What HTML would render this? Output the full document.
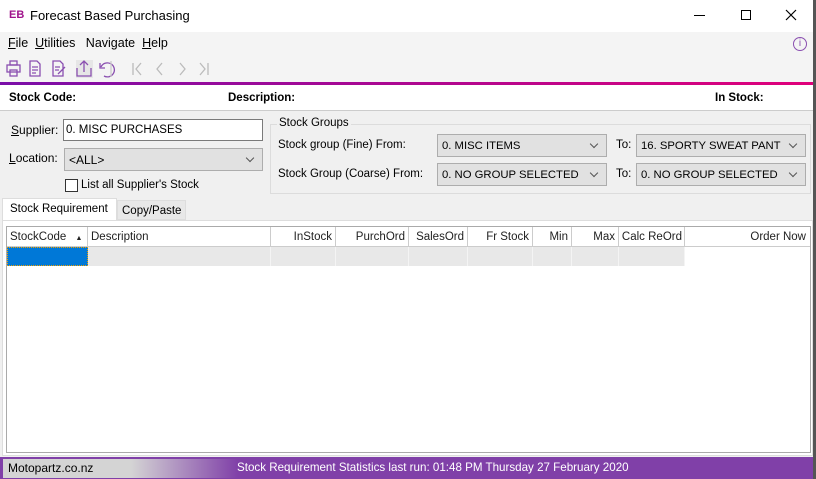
<!DOCTYPE html>
<html><head><style>
*{box-sizing:border-box;margin:0;padding:0}
body{width:816px;height:479px;overflow:hidden;background:#f0f0f0;font-family:"Liberation Sans",sans-serif;font-size:12px;color:#000;position:relative}
.a{position:absolute;white-space:nowrap}
.cb{position:absolute;background:#e1e1e1;border:1px solid #adadad;height:23px;padding:5px 4px;font-size:11.3px;overflow:hidden;white-space:nowrap}
.cb:after{content:"";position:absolute;right:9px;top:6px;width:5px;height:5px;border-right:1px solid #555;border-bottom:1px solid #555;transform:rotate(45deg)}
.h{position:absolute;top:227px;height:20px;border-right:1px solid #ccc;padding:4px 3px;text-align:right;font-size:11.5px;color:#222;white-space:nowrap;overflow:hidden}
.c{position:absolute;top:247px;height:19px;background:#e8e8e8;border-right:1px solid #f4f4f4}
</style></head><body>
<div class="a" style="left:0;top:0;width:816px;height:32px;background:#fff"></div>
<div class="a" style="left:9px;top:9px;font-weight:bold;font-size:11px;color:#a0148c">EB</div>
<div class="a" style="left:30px;top:8px;font-size:13px">Forecast Based Purchasing</div>
<div class="a" style="left:694px;top:15px;width:11px;height:1px;background:#000"></div>
<div class="a" style="left:741px;top:10px;width:10px;height:10px;border:1px solid #000"></div>
<svg class="a" style="left:785px;top:9px" width="12" height="12" stroke="#000" stroke-width="1.2"><path d="M1 1l10 10M11 1L1 11"/></svg>
<div class="a" style="left:0;top:32px;width:813px;height:50px;background:#f4f4f4"></div>
<div class="a" style="left:8px;top:36px;font-size:12.5px"><u>F</u>ile &nbsp;<u>U</u>tilities &nbsp; Navigate &nbsp;<u>H</u>elp</div>
<div class="a" style="left:793px;top:37px;width:14px;height:14px;border:1px solid #8a4fb0;border-radius:50%;color:#8a4fb0;font-size:10px;text-align:center;line-height:12px">i</div>
<svg class="a" style="left:5px;top:59px" width="210" height="20" fill="none" stroke="#8a4fb0" stroke-width="1.3">
<rect x="2" y="6" width="13" height="7"/><rect x="5" y="2" width="7" height="4"/><rect x="5" y="11" width="7" height="6"/>
<path d="M25 2h7l3 3v12h-10z M27 8h6 M27 11h6 M27 14h4"/>
<path d="M48 2h7l3 3v12h-10z M50 8h5 M50 11h4 M53 15l7-7"/>
<rect x="71" y="1" width="17" height="18" fill="#e6e6e6" stroke="none"/><path d="M72 9v8h14v-8 M79 3v10 M75 6l4-4 4 4"/>
<path d="M95 4v5h5 M96 8a7 7 0 1 1 3 9"/>
<path d="M106 2v16" stroke="#ccc"/>
<path stroke="#bbb" d="M128 4v12 M136 4l-5 6 5 6 M157 4l-5 6 5 6 M175 4l5 6-5 6 M195 4l5 6-5 6 M203 4v12"/>
</svg>
<div class="a" style="left:0;top:82px;width:813px;height:3px;background:linear-gradient(90deg,#7a0ea8,#e0007a)"></div>
<div class="a" style="left:0;top:85px;width:813px;height:26px;background:#fff;border-bottom:1px solid #ccc"></div>
<div class="a" style="left:9px;top:92px;font-weight:bold;font-size:11.5px">Stock Code:</div>
<div class="a" style="left:228px;top:92px;font-weight:bold;font-size:11.5px">Description:</div>
<div class="a" style="left:715px;top:92px;font-weight:bold;font-size:11.5px">In Stock:</div>
<div class="a" style="left:11px;top:123px"><u>S</u>upplier:</div>
<div class="a" style="left:63px;top:119px;width:200px;height:22px;background:#fff;border:1px solid #7a7a7a;padding:4px 2px;font-size:11.5px">0. MISC PURCHASES</div>
<div class="a" style="left:9px;top:151px"><u>L</u>ocation:</div>
<div class="cb" style="left:64px;top:148px;width:199px;font-size:12px;padding:4px 4px">&lt;ALL&gt;</div>
<div class="a" style="left:65px;top:179px;width:13px;height:13px;border:1px solid #333;background:#fff"></div>
<div class="a" style="left:81px;top:179px;font-size:11.5px">List all Supplier's Stock</div>
<div class="a" style="left:270px;top:124px;width:541px;height:70px;border:1px solid #dcdcdc"></div>
<div class="a" style="left:277px;top:117px;background:#f0f0f0;padding:0 2px;font-size:11.5px">Stock Groups</div>
<div class="a" style="left:278px;top:139px;font-size:11.5px">Stock group (Fine) From:</div>
<div class="a" style="left:278px;top:168px;font-size:11.5px">Stock Group (Coarse) From:</div>
<div class="cb" style="left:437px;top:134px;width:170px">0. MISC ITEMS</div>
<div class="cb" style="left:437px;top:163px;width:170px">0. NO GROUP SELECTED</div>
<div class="a" style="left:616px;top:139px;font-size:11.5px">To:</div>
<div class="a" style="left:616px;top:168px;font-size:11.5px">To:</div>
<div class="cb" style="left:636px;top:134px;width:170px">16. SPORTY SWEAT PANT</div>
<div class="cb" style="left:636px;top:163px;width:170px">0. NO GROUP SELECTED</div>
<div class="a" style="left:2px;top:198px;width:115px;height:23px;background:#fff;border:1px solid #ddd;border-bottom:none;padding:4px 7px;font-size:11.5px">Stock Requirement</div>
<div class="a" style="left:117px;top:200px;width:69px;height:20px;background:#e8e8e8;border:1px solid #ddd;padding:4px 4px;font-size:11.5px">Copy/Paste</div>
<div class="a" style="left:2px;top:220px;width:811px;height:236px;background:#fff;border:1px solid #ddd"></div>
<div class="a" style="left:6px;top:226px;width:805px;height:227px;background:#fff;border:1px solid #aaa"></div>
<div class="a" style="left:7px;top:227px;width:803px;height:20px;background:#fff;border-bottom:1px solid #ccc"></div>
<div class="h" style="left:7px;width:81px;text-align:left">StockCode <span style="font-size:7px;margin-left:6px">▲</span></div>
<div class="h" style="left:88px;width:183px;text-align:left">Description</div>
<div class="h" style="left:271px;width:65px">InStock</div>
<div class="h" style="left:336px;width:73px">PurchOrd</div>
<div class="h" style="left:409px;width:59px">SalesOrd</div>
<div class="h" style="left:468px;width:65px">Fr Stock</div>
<div class="h" style="left:533px;width:39px">Min</div>
<div class="h" style="left:572px;width:47px">Max</div>
<div class="h" style="left:619px;width:66px;padding:4px 2px">Calc ReOrd</div>
<div class="h" style="left:685px;width:124px;border-right:none">Order Now</div>
<div class="c" style="left:7px;width:81px;background:#0078d7;border:1px dotted #f0a000"></div>
<div class="c" style="left:88px;width:183px"></div>
<div class="c" style="left:271px;width:65px"></div>
<div class="c" style="left:336px;width:73px"></div>
<div class="c" style="left:409px;width:59px"></div>
<div class="c" style="left:468px;width:65px"></div>
<div class="c" style="left:533px;width:39px"></div>
<div class="c" style="left:572px;width:47px"></div>
<div class="c" style="left:619px;width:66px"></div>
<div class="a" style="left:0;top:457px;width:813px;height:22px;background:#8040a8"></div>
<div class="a" style="left:3px;top:459px;width:235px;height:19px;background:linear-gradient(90deg,#d4d4d4 0,#d4d4d4 128px,#8040a8 100%)"></div>
<div class="a" style="left:8px;top:461px;font-size:12px">Motopartz.co.nz</div>
<div class="a" style="left:237px;top:461px;font-size:11.6px;color:#fff">Stock Requirement Statistics last run: 01:48 PM Thursday 27 February 2020</div>
<div class="a" style="left:813px;top:0;width:3px;height:479px;background:#555"></div>
</body></html>
